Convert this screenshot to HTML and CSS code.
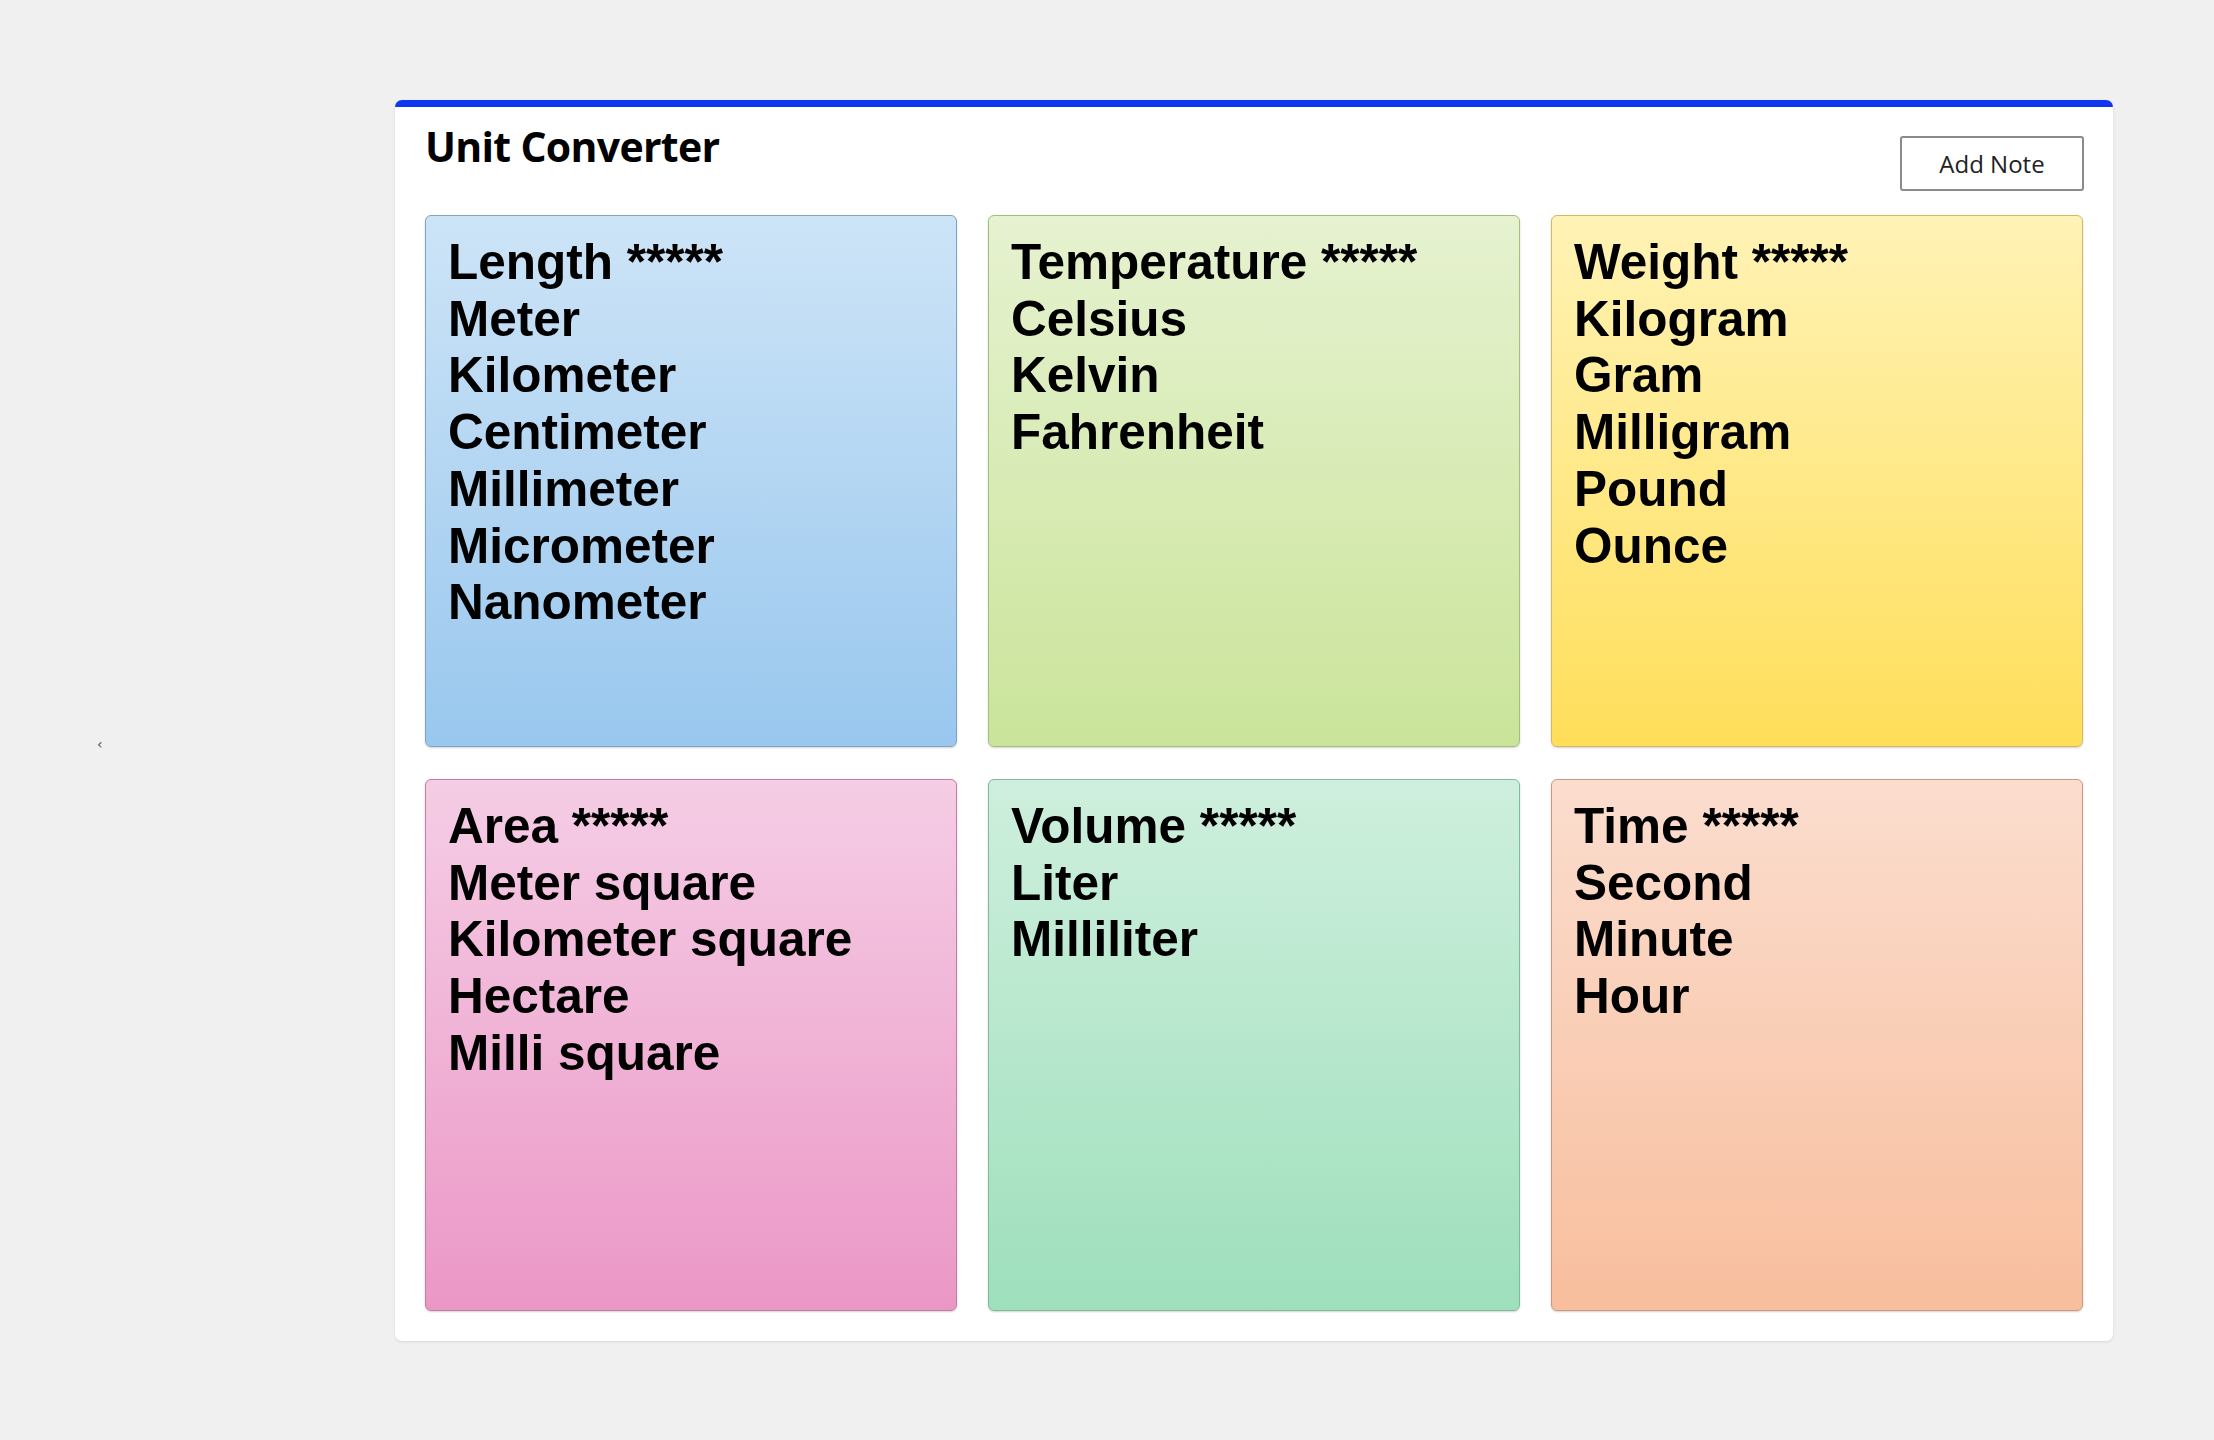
FILE: index.html
```html
<!DOCTYPE html>
<html lang="en">
<head>
<meta charset="utf-8">
<title>Unit Converter</title>
<link rel="stylesheet" href="styles.css">
</head>
<body>
<div class="layout">
  <aside class="sidebar"><span class="toggle">‹</span></aside>
  <main class="panel">
    <header class="panel-head">
      <h1 class="title">Unit Converter</h1>
      <button class="add-btn" type="button">Add Note</button>
    </header>
    <section class="notes">
      <div class="note note-blue">Length *****<br>Meter<br>Kilometer<br>Centimeter<br>Millimeter<br>Micrometer<br>Nanometer</div>
      <div class="note note-green">Temperature *****<br>Celsius<br>Kelvin<br>Fahrenheit</div>
      <div class="note note-yellow">Weight *****<br>Kilogram<br>Gram<br>Milligram<br>Pound<br>Ounce</div>
      <div class="note note-pink">Area *****<br>Meter square<br>Kilometer square<br>Hectare<br>Milli square</div>
      <div class="note note-mint">Volume *****<br>Liter<br>Milliliter</div>
      <div class="note note-peach">Time *****<br>Second<br>Minute<br>Hour</div>
    </section>
  </main>
</div>
</body>
</html>
```
FILE: styles.css
```css
html, body {
  margin: 0;
  padding: 0;
  background: #f0f0f0;
}
body {
  font-family: "Liberation Sans", Arial, sans-serif;
  width: 2214px;
  height: 1440px;
  overflow: hidden;
}
.layout {
  display: flex;
  align-items: flex-start;
}
.sidebar {
  width: 395px;
  flex: none;
  padding-top: 734px;
  box-sizing: border-box;
  padding-left: 97px;
}
.toggle {
  font-family: "DejaVu Sans", sans-serif;
  font-size: 14px;
  color: #555;
  line-height: 20px;
}
.panel {
  margin-top: 100px;
  width: 1718px;
  box-sizing: border-box;
  background: #fff;
  border-top: 7px solid #0f36f0;
  border-radius: 7px;
  padding: 11px 29px 30px 30px;
  box-shadow: 0 1px 3px rgba(0, 0, 0, 0.1);
}
.panel-head {
  display: flex;
  justify-content: space-between;
  align-items: flex-start;
}
.title {
  margin: 0;
  font-family: "Open Sans", "Noto Sans", sans-serif;
  font-weight: 700;
  font-size: 41px;
  letter-spacing: -0.7px;
  color: #000;
}
.add-btn {
  margin-top: 18px;
  width: 184px;
  height: 55px;
  background: #fff;
  border: 2px solid #8a8a8a;
  border-radius: 3px;
  font-family: "Open Sans", "Noto Sans", sans-serif;
  font-size: 24px;
  color: #222;
  padding: 0;
}
.notes {
  margin-top: 24px;
  display: grid;
  grid-template-columns: repeat(3, 532px);
  grid-auto-rows: 532px;
  column-gap: 31px;
  row-gap: 32px;
}
.note {
  box-sizing: border-box;
  border: 1.5px solid;
  border-radius: 6px;
  padding: 18px 22px;
  font-size: 49.5px;
  line-height: 56.7px;
  font-weight: 700;
  color: #000;
  box-shadow: 0 1px 2px rgba(0, 0, 0, 0.18);
}
.note-blue {
  background: linear-gradient(#cde4f7, #99c7ee);
  border-color: #80a3c2;
}
.note-green {
  background: linear-gradient(#e6f2d0, #cae49a);
  border-color: #a2bf80;
}
.note-yellow {
  background: linear-gradient(#fff3b6, #ffde59);
  border-color: #d2ba60;
}
.note-pink {
  background: linear-gradient(#f5cde5, #eb97c6);
  border-color: #c47ca3;
}
.note-mint {
  background: linear-gradient(#ceefdd, #9edfbc);
  border-color: #80ba99;
}
.note-peach {
  background: linear-gradient(#fbddce, #f8be9d);
  border-color: #ca9980;
}
```
